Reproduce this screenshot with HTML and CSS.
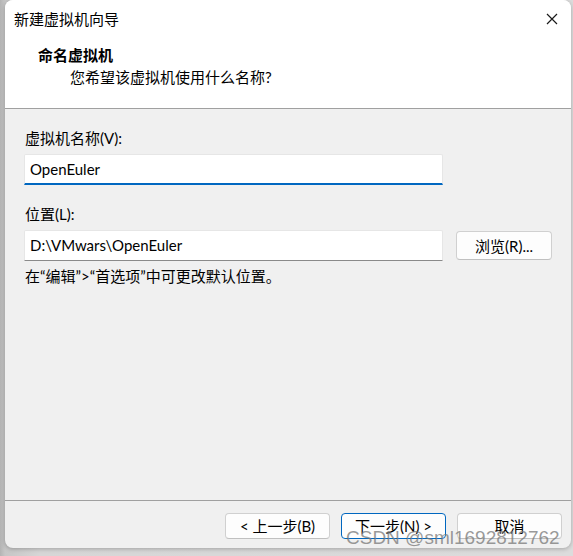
FILE: index.html
```html
<!DOCTYPE html>
<html lang="zh-CN">
<head>
<meta charset="utf-8">
<title>新建虚拟机向导</title>
<link rel="stylesheet" href="styles.css">
</head>
<body>
<div class="window">
  <div class="top">
    <div class="titlebar">
      <span class="title">新建虚拟机向导</span>
      <span class="close">
        <svg width="12" height="12" viewBox="0 0 12 12"><path d="M1 1 L11 11 M11 1 L1 11" stroke="#1a1a1a" stroke-width="1.2" fill="none"/></svg>
      </span>
    </div>
    <div class="header">
      <div class="h-title">命名虚拟机</div>
      <div class="h-sub">您希望该虚拟机使用什么名称?</div>
    </div>
  </div>
  <div class="content">
    <div class="label first">虚拟机名称(V):</div>
    <div class="row">
      <div class="input focused">OpenEuler</div>
    </div>
    <div class="label second">位置(L):</div>
    <div class="row">
      <div class="input">D:\VMwars\OpenEuler</div>
      <div class="btn browse">浏览(R)...</div>
    </div>
    <div class="hint">在“编辑”&gt;“首选项”中可更改默认位置。</div>
  </div>
  <div class="footer">
    <div class="btn fbtn">&lt; 上一步(B)</div>
    <div class="btn fbtn primary">下一步(N) &gt;</div>
    <div class="btn fbtn">取消</div>
  </div>
  <div class="watermark">CSDN @sml1692812762</div>
</div>
</body>
</html>
```

FILE: styles.css
```css
html, body {
  margin: 0;
  padding: 0;
}
body {
  width: 573px;
  height: 556px;
  overflow: hidden;
  background: linear-gradient(to right, #b4b4b4 0px, #c6c6c6 5px, #d6d6d6 40px, #dcdcdc 100%);
  font-family: Lato, "Noto Sans CJK SC", sans-serif;
  font-size: 15px;
  color: #000;
}
.window {
  position: relative;
  margin-left: 5px;
  width: 566px;
  height: 548px;
  border-radius: 8px;
  background: #f0f0f0;
  overflow: hidden;
  display: flex;
  flex-direction: column;
  box-shadow: 0 1px 4px rgba(0,0,0,0.25);
}
.top {
  background: #fff;
  height: 108px;
  border-bottom: 1px solid #a0a0a0;
  flex: none;
}
.titlebar {
  height: 37px;
  display: flex;
  align-items: center;
  justify-content: space-between;
  padding-left: 9px;
  padding-right: 13px;
}
.title {
  font-size: 15px;
  line-height: 20px;
}
.close {
  display: flex;
  width: 12px;
  height: 12px;
}
.header {
  padding-left: 33px;
}
.h-title {
  font-weight: bold;
  font-size: 15px;
  line-height: 20px;
  margin-top: 8px;
}
.h-sub {
  padding-left: 32px;
  margin-top: 2px;
  line-height: 20px;
}
.content {
  flex: 1;
  padding-left: 19px;
  padding-top: 19px;
  border-bottom: 1px solid #a0a0a0;
}
.label {
  padding-left: 1px;
  line-height: 20px;
}
.label.second {
  margin-top: 19px;
}
.row {
  display: flex;
  align-items: center;
  margin-top: 6px;
}
.input {
  box-sizing: border-box;
  width: 419px;
  height: 31px;
  background: #fff;
  border: 1px solid #e6e6e6;
  border-bottom: 1px solid #8a8a8a;
  border-radius: 2px 2px 0 0;
  padding-left: 5px;
  line-height: 28px;
}
.input.focused {
  border-bottom: 2px solid #0067c0;
}
.btn {
  box-sizing: border-box;
  background: #fdfdfd;
  border: 1px solid #d0d0d0;
  border-bottom-color: #c0c0c0;
  border-radius: 4px;
  display: flex;
  align-items: center;
  justify-content: center;
  line-height: 20px;
}
.browse {
  width: 96px;
  height: 29px;
  margin-left: 13px;
}
.hint {
  margin-top: 5px;
  padding-left: 1px;
  line-height: 20px;
}
.footer {
  flex: none;
  height: 47px;
  display: flex;
  justify-content: flex-end;
  align-items: flex-start;
  gap: 11px;
  padding-right: 9px;
  padding-top: 12px;
  box-sizing: border-box;
}
.fbtn {
  width: 105px;
  height: 26px;
}
.fbtn.primary {
  border: 1px solid #0067c0;
}
.watermark {
  position: absolute;
  left: 341px;
  top: 527px;
  font-family: "Liberation Sans", Arial, sans-serif;
  font-size: 19px;
  line-height: 22px;
  color: rgba(120,120,120,0.75);
  white-space: nowrap;
}
```
